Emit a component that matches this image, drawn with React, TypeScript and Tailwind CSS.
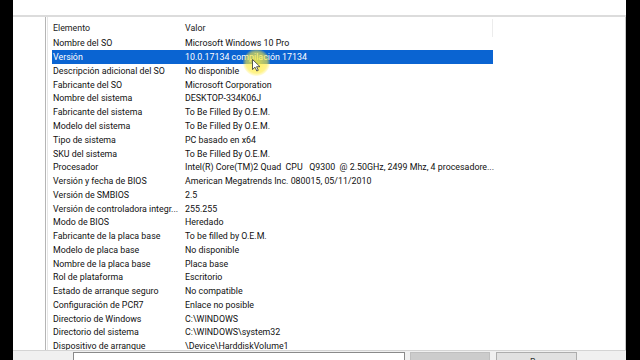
import React from "react";

const rows: [string, string][] = [
  ["Nombre del SO", "Microsoft Windows 10 Pro"],
  ["Versión", "10.0.17134 compilación 17134"],
  ["Descripción adicional del SO", "No disponible"],
  ["Fabricante del SO", "Microsoft Corporation"],
  ["Nombre del sistema", "DESKTOP-334K06J"],
  ["Fabricante del sistema", "To Be Filled By O.E.M."],
  ["Modelo del sistema", "To Be Filled By O.E.M."],
  ["Tipo de sistema", "PC basado en x64"],
  ["SKU del sistema", "To Be Filled By O.E.M."],
  ["Procesador", "Intel(R) Core(TM)2 Quad  CPU   Q9300  @ 2.50GHz, 2499 Mhz, 4 procesadore..."],
  ["Versión y fecha de BIOS", "American Megatrends Inc. 080015, 05/11/2010"],
  ["Versión de SMBIOS", "2.5"],
  ["Versión de controladora integr...", "255.255"],
  ["Modo de BIOS", "Heredado"],
  ["Fabricante de la placa base", "To be filled by O.E.M."],
  ["Modelo de placa base", "No disponible"],
  ["Nombre de la placa base", "Placa base"],
  ["Rol de plataforma", "Escritorio"],
  ["Estado de arranque seguro", "No compatible"],
  ["Configuración de PCR7", "Enlace no posible"],
  ["Directorio de Windows", "C:\\WINDOWS"],
  ["Directorio del sistema", "C:\\WINDOWS\\system32"],
  ["Dispositivo de arranque", "\\Device\\HarddiskVolume1"],
];

export default function App() {
  return (
    <div
      className="w-[640px] h-[360px] bg-black flex overflow-hidden relative"
      style={{ fontFamily: 'Roboto, "Noto Sans", sans-serif' }}
    >
      <div className="w-[13px] shrink-0" />
      <div className="w-[613px] shrink-0 flex flex-col bg-white">
        <div className="h-[15px] bg-white" />
        <div className="h-[2px] bg-[#dcdcdc]" />
        <div className="flex-1 flex min-h-0 overflow-hidden">
          <div className="w-[33px] shrink-0 bg-white border-r border-[#b5b5b5]" />
          <div className="w-[2px] shrink-0 bg-white border-r border-[#e6e6e6]" />
          <div className="flex-1 flex flex-col border-r border-[#c8c8c8] overflow-hidden pl-[4px] text-[8.85px] text-[#111] leading-[12px]">
            <div className="h-[19.5px] shrink-0 flex items-center w-[441px] pt-[2px]">
              <div className="w-[133px] pl-[1px] text-[#222]">Elemento</div>
              <div className="flex-1 text-[#222]">Valor</div>
              <div className="w-px h-full bg-[#ececec]" />
            </div>
            {rows.map(([k, v], i) => {
              const sel = i === 1;
              return (
                <div
                  key={i}
                  className={
                    "h-[13.77px] shrink-0 flex items-center w-[441px] whitespace-pre " +
                    (sel ? "bg-[#0a64d2] text-white" : "")
                  }
                >
                  <div className="w-[133px] shrink-0 pl-[1px]">{k}</div>
                  <div className="flex-1">{v}</div>
                </div>
              );
            })}
          </div>
        </div>
        <div className="h-[10px] shrink-0 bg-[#f0f0f0] border-t border-[#d4d4d4] flex items-start pt-[1px] overflow-hidden">
          <div className="w-[60px] shrink-0" />
          <div className="w-[332px] h-[12px] shrink-0 bg-white border border-[#8a8a8a]" />
          <div className="w-[5px] shrink-0" />
          <div className="w-[80px] h-[12px] shrink-0 bg-[#cccccc] border border-[#bfbfbf]" />
          <div className="w-[6px] shrink-0" />
          <div className="w-[81px] h-[12px] shrink-0 bg-[#e1e1e1] border border-[#adadad] relative overflow-hidden">
            <span className="absolute left-[33px] top-[5px] text-[9px] leading-none text-[#333]">Buscar</span>
          </div>
        </div>
      </div>
      {/* cursor highlight */}
      <div className="absolute left-[243px] top-[49px] w-[27px] h-[27px] rounded-full bg-[radial-gradient(circle,rgba(255,240,60,0.85)_0%,rgba(255,235,60,0.6)_55%,rgba(255,235,60,0)_75%)] pointer-events-none" />
      <svg className="absolute left-[252px] top-[59px]" width="9" height="13" viewBox="0 0 9 13">
        <path d="M0.5 0.5 L0.5 10.5 L3 8.2 L4.8 12 L6.3 11.3 L4.6 7.7 L8 7.7 Z" fill="white" stroke="#333" strokeWidth="0.8" strokeLinejoin="round" />
      </svg>
    </div>
  );
}
